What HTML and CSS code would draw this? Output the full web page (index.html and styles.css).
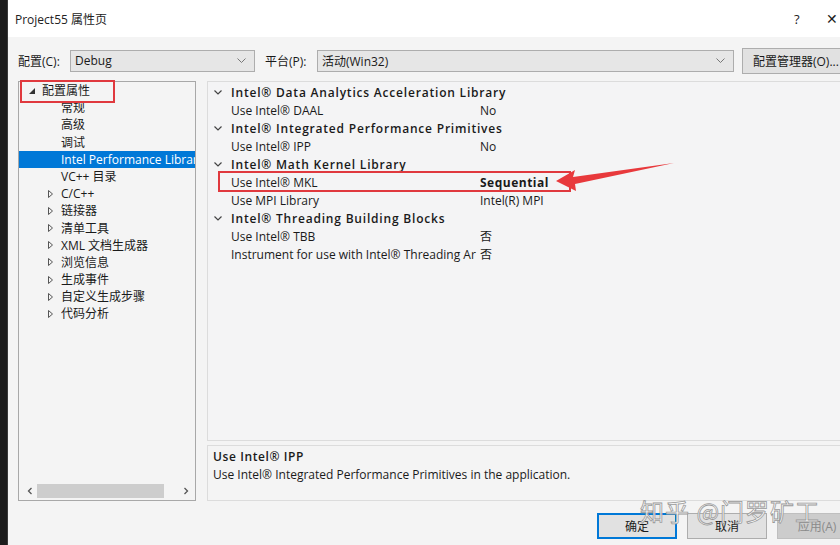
FILE: index.html
```html
<!DOCTYPE html>
<html lang="zh-CN">
<head>
<meta charset="utf-8">
<title>Project55 属性页</title>
<link rel="stylesheet" href="styles.css">
</head>
<body>
<div class="strip"></div>
<div class="dialog">
  <div class="titlebar">
    <span class="title">Project55 属性页</span>
    <span class="tb-help">?</span>
    <span class="tb-close">✕</span>
  </div>
  <div class="content">
    <div class="toolbar">
      <span class="lbl">配置(C):</span>
      <div class="combo combo-cfg"><span>Debug</span><svg class="dd" width="9" height="6" viewBox="0 0 9 6"><polyline points="0.5,0.5 4.5,4.5 8.5,0.5" fill="none" stroke="#777" stroke-width="1"/></svg></div>
      <span class="lbl lbl-plat">平台(P):</span>
      <div class="combo combo-plat"><span>活动(Win32)</span><svg class="dd" width="9" height="6" viewBox="0 0 9 6"><polyline points="0.5,0.5 4.5,4.5 8.5,0.5" fill="none" stroke="#777" stroke-width="1"/></svg></div>
      <div class="btn-mgr">配置管理器(O)...</div>
    </div>
    <div class="main">
      <div class="tree">
        <div class="tree-items">
          <div class="ti root"><svg class="tri" width="6" height="6" viewBox="0 0 6 6"><polygon points="6,0 6,6 0,6" fill="#333"/></svg>配置属性</div>
          <div class="ti leaf">常规</div>
          <div class="ti leaf">高级</div>
          <div class="ti leaf">调试</div>
          <div class="ti leaf sel">Intel Performance Libraries</div>
          <div class="ti leaf">VC++ 目录</div>
          <div class="ti node"><svg class="tri" width="5" height="8" viewBox="0 0 5 8"><polygon points="0.5,0.5 4.5,4 0.5,7.5" fill="none" stroke="#555" stroke-width="1"/></svg>C/C++</div>
          <div class="ti node"><svg class="tri" width="5" height="8" viewBox="0 0 5 8"><polygon points="0.5,0.5 4.5,4 0.5,7.5" fill="none" stroke="#555" stroke-width="1"/></svg>链接器</div>
          <div class="ti node"><svg class="tri" width="5" height="8" viewBox="0 0 5 8"><polygon points="0.5,0.5 4.5,4 0.5,7.5" fill="none" stroke="#555" stroke-width="1"/></svg>清单工具</div>
          <div class="ti node"><svg class="tri" width="5" height="8" viewBox="0 0 5 8"><polygon points="0.5,0.5 4.5,4 0.5,7.5" fill="none" stroke="#555" stroke-width="1"/></svg>XML 文档生成器</div>
          <div class="ti node"><svg class="tri" width="5" height="8" viewBox="0 0 5 8"><polygon points="0.5,0.5 4.5,4 0.5,7.5" fill="none" stroke="#555" stroke-width="1"/></svg>浏览信息</div>
          <div class="ti node"><svg class="tri" width="5" height="8" viewBox="0 0 5 8"><polygon points="0.5,0.5 4.5,4 0.5,7.5" fill="none" stroke="#555" stroke-width="1"/></svg>生成事件</div>
          <div class="ti node"><svg class="tri" width="5" height="8" viewBox="0 0 5 8"><polygon points="0.5,0.5 4.5,4 0.5,7.5" fill="none" stroke="#555" stroke-width="1"/></svg>自定义生成步骤</div>
          <div class="ti node"><svg class="tri" width="5" height="8" viewBox="0 0 5 8"><polygon points="0.5,0.5 4.5,4 0.5,7.5" fill="none" stroke="#555" stroke-width="1"/></svg>代码分析</div>
        </div>
        <div class="hscroll">
          <svg class="sa" width="8" height="8" viewBox="0 0 8 8"><polyline points="5.5,1 2.5,4 5.5,7" fill="none" stroke="#555" stroke-width="1.3"/></svg>
          <div class="thumb"></div>
          <svg class="sa" width="8" height="8" viewBox="0 0 8 8"><polyline points="2.5,1 5.5,4 2.5,7" fill="none" stroke="#555" stroke-width="1.3"/></svg>
        </div>
        <div class="mark mark-root"></div>
      </div>
      <div class="right">
        <div class="grid">
          <div class="pr hdr"><svg class="chev" width="8" height="5" viewBox="0 0 8 5"><polyline points="0.5,0.5 4,4 7.5,0.5" fill="none" stroke="#444" stroke-width="1.2"/></svg><span class="pn">Intel® Data Analytics Acceleration Library</span></div>
          <div class="pr"><span class="pn">Use Intel® DAAL</span><span class="pv">No</span></div>
          <div class="pr hdr"><svg class="chev" width="8" height="5" viewBox="0 0 8 5"><polyline points="0.5,0.5 4,4 7.5,0.5" fill="none" stroke="#444" stroke-width="1.2"/></svg><span class="pn">Intel® Integrated Performance Primitives</span></div>
          <div class="pr"><span class="pn">Use Intel® IPP</span><span class="pv">No</span></div>
          <div class="pr hdr"><svg class="chev" width="8" height="5" viewBox="0 0 8 5"><polyline points="0.5,0.5 4,4 7.5,0.5" fill="none" stroke="#444" stroke-width="1.2"/></svg><span class="pn">Intel® Math Kernel Library</span></div>
          <div class="pr"><span class="pn">Use Intel® MKL</span><span class="pv strong">Sequential</span></div>
          <div class="pr"><span class="pn">Use MPI Library</span><span class="pv">Intel(R) MPI</span></div>
          <div class="pr hdr"><svg class="chev" width="8" height="5" viewBox="0 0 8 5"><polyline points="0.5,0.5 4,4 7.5,0.5" fill="none" stroke="#444" stroke-width="1.2"/></svg><span class="pn">Intel® Threading Building Blocks</span></div>
          <div class="pr"><span class="pn">Use Intel® TBB</span><span class="pv">否</span></div>
          <div class="pr"><span class="pn">Instrument for use with Intel® Threading Ar</span><span class="pv">否</span></div>
          <div class="mark mark-mkl"></div>
          <svg class="arrow" width="130" height="32" viewBox="0 0 130 32"><polygon points="3,19 22,8 20,15 121,1 22,22 23,29" fill="#e8393c"/></svg>
        </div>
        <div class="desc">
          <div class="desc-title">Use Intel® IPP</div>
          <div class="desc-text">Use Intel® Integrated Performance Primitives in the application.</div>
        </div>
      </div>
    </div>
    <div class="footer">
      <span class="watermark">知乎 @门罗矿工</span>
      <div class="btn btn-ok">确定</div>
      <div class="btn">取消</div>
      <div class="btn btn-dis">应用(A)</div>
    </div>
  </div>
</div>
</body>
</html>
```
FILE: styles.css
```css
html, body {
  margin: 0;
  padding: 0;
}
body {
  width: 840px;
  height: 545px;
  overflow: hidden;
  display: flex;
  background: #f4f4f4;
  font-family: "Open Sans", "Noto Sans CJK SC", sans-serif;
  font-size: 12px;
  color: #1a1a1a;
}
.strip {
  width: 8px;
  flex: none;
  background: #1c1c1c;
  border-right: 1px solid #3a3a3a;
  box-sizing: border-box;
}
.dialog {
  width: 849px;
  flex: none;
  display: flex;
  flex-direction: column;
  background: #f4f4f4;
}
.titlebar {
  height: 37px;
  background: #ffffff;
  display: flex;
  align-items: center;
  font-size: 12px;
  color: #222;
}
.title {
  margin-left: 7px;
  flex: 1;
}
.tb-help {
  width: 32px;
  font-size: 13px;
}
.tb-close {
  width: 31px;
  font-size: 14px;
}
.content {
  flex: 1;
  padding: 0 0 0 10px;
  display: flex;
  flex-direction: column;
  position: relative;
}
.toolbar {
  height: 42px;
  display: flex;
  align-items: center;
  padding-top: 5px;
  box-sizing: border-box;
}
.lbl {
  width: 52px;
}
.lbl-plat {
  margin-left: 10px;
}
.combo {
  height: 22px;
  box-sizing: border-box;
  background: #e6e6e6;
  border: 1px solid #adadad;
  display: flex;
  align-items: center;
  justify-content: space-between;
  padding: 0 8px 0 4px;
}
.combo-cfg {
  width: 185px;
}
.combo-plat {
  width: 417px;
}
.btn-mgr {
  margin-left: 8px;
  width: 112px;
  height: 26px;
  box-sizing: border-box;
  border: 1px solid #adadad;
  background: #e1e1e1;
  display: flex;
  align-items: center;
  padding-left: 10px;
}
.main {
  display: flex;
  height: 420px;
  margin-top: 2px;
}
.tree {
  width: 178px;
  box-sizing: border-box;
  border: 1px solid #a8a8a8;
  background: #f4f4f4;
  display: flex;
  flex-direction: column;
  position: relative;
}
.tree-items {
  flex: 1;
  overflow: hidden;
}
.ti {
  height: 17.2px;
  line-height: 17.2px;
  white-space: nowrap;
  display: flex;
  align-items: center;
}
.ti.root {
  padding-left: 10px;
}
.ti.root .tri {
  margin-right: 7px;
}
.ti.leaf {
  padding-left: 42px;
}
.ti.node {
  padding-left: 29px;
}
.ti.node .tri {
  margin-right: 8px;
}
.ti.sel {
  background: #0078d7;
  color: #fff;
}
.hscroll {
  height: 18px;
  display: flex;
  align-items: center;
  padding: 0 5px 0 7px;
  gap: 3px;
}
.thumb {
  width: 127px;
  height: 14px;
  background: #cdcdcd;
  margin-right: auto;
}
.right {
  margin-left: 11px;
  flex: 1;
  display: flex;
  flex-direction: column;
}
.grid {
  height: 360px;
  box-sizing: border-box;
  border: 1px solid #dcdcdc;
  border-right: none;
  background: #f4f4f5;
  padding-top: 1px;
  position: relative;
}
.pr {
  height: 18px;
  display: flex;
  align-items: center;
  padding-left: 23px;
  white-space: nowrap;
}
.pr.hdr {
  padding-left: 6px;
  font-weight: 600;
  font-size: 12px;
  letter-spacing: 0.8px;
}
.chev {
  margin-right: 9px;
}
.pn {
  width: 249px;
  overflow: hidden;
}
.hdr .pn {
  width: auto;
}
.pv.strong {
  font-weight: 700;
  letter-spacing: 0.5px;
}
.desc {
  margin-top: 4px;
  height: 56px;
  box-sizing: border-box;
  border: 1px solid #dcdcdc;
  border-right: none;
  padding: 2px 5px;
}
.desc-title {
  font-weight: 600;
  letter-spacing: 0.6px;
  line-height: 18px;
}
.desc-text {
  line-height: 18px;
}
.footer {
  flex: 1;
  display: flex;
  align-items: center;
  justify-content: flex-end;
  gap: 10px;
  padding-top: 5px;
  position: relative;
}
.btn {
  width: 80px;
  height: 26px;
  box-sizing: border-box;
  border: 1px solid #adadad;
  background: #e1e1e1;
  display: flex;
  align-items: center;
  justify-content: center;
}
.btn-ok {
  border: 2px solid #0078d7;
}
.btn-dis {
  background: #cccccc;
  border-color: #bfbfbf;
  color: #8a8a8a;
}
.watermark {
  position: absolute;
  left: 622px;
  top: -8px;
  font-size: 24px;
  letter-spacing: 1px;
  color: rgba(255, 255, 255, 0.9);
  -webkit-text-stroke: 0.8px #999999;
  font-family: "Noto Sans CJK SC", sans-serif;
  white-space: nowrap;
}
.mark {
  position: absolute;
  border: 2px solid #e0393e;
  box-sizing: border-box;
}
.mark-root {
  left: 1px;
  top: -2px;
  width: 95px;
  height: 23px;
}
.mark-mkl {
  left: 10px;
  top: 89px;
  width: 353px;
  height: 21px;
}
.arrow {
  position: absolute;
  left: 345px;
  top: 80px;
}
```
